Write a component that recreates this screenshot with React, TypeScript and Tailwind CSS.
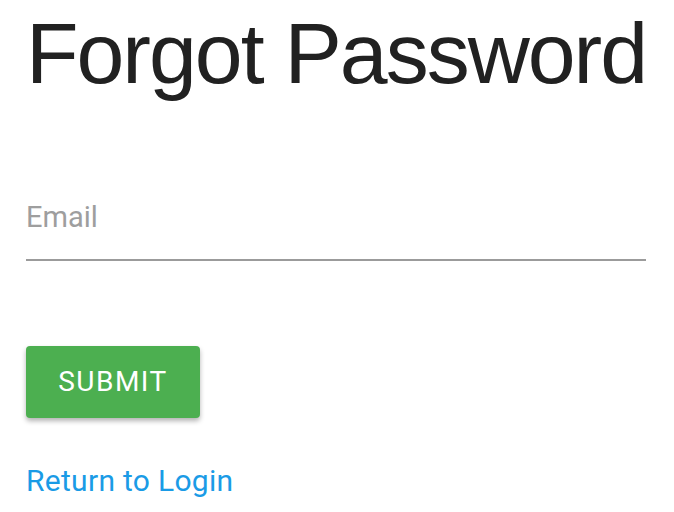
export default function App() {
  return (
    <div className="bg-white w-[674px] h-[512px] overflow-hidden pl-[26px] pr-[28px]" style={{ fontFamily: "Roboto, 'Helvetica Neue', Arial, sans-serif" }}>
      <h1 className="text-[86px] leading-[100px] text-[#212121] font-normal mt-[3px] tracking-[-2px] whitespace-nowrap" style={{ fontFamily: "'Liberation Sans', Arial, sans-serif" }}>Forgot Password</h1>
      <div className="mt-[94px] border-b-2 border-[#9b9b9b] h-[64px]">
        <div className="text-[29px] leading-[40px] text-[#9e9e9e]">Email</div>
      </div>
      <button className="mt-[85px] w-[174px] h-[72px] bg-[#4caf50] rounded-[4px] text-white text-[28px] tracking-[1.5px] uppercase shadow-[0_3px_5px_rgba(0,0,0,0.3)] flex items-center justify-center">
        Submit
      </button>
      <div className="mt-[45px] text-[30px] leading-[36px] text-[#1a9be6] tracking-[0.3px]">Return to Login</div>
    </div>
  );
}
